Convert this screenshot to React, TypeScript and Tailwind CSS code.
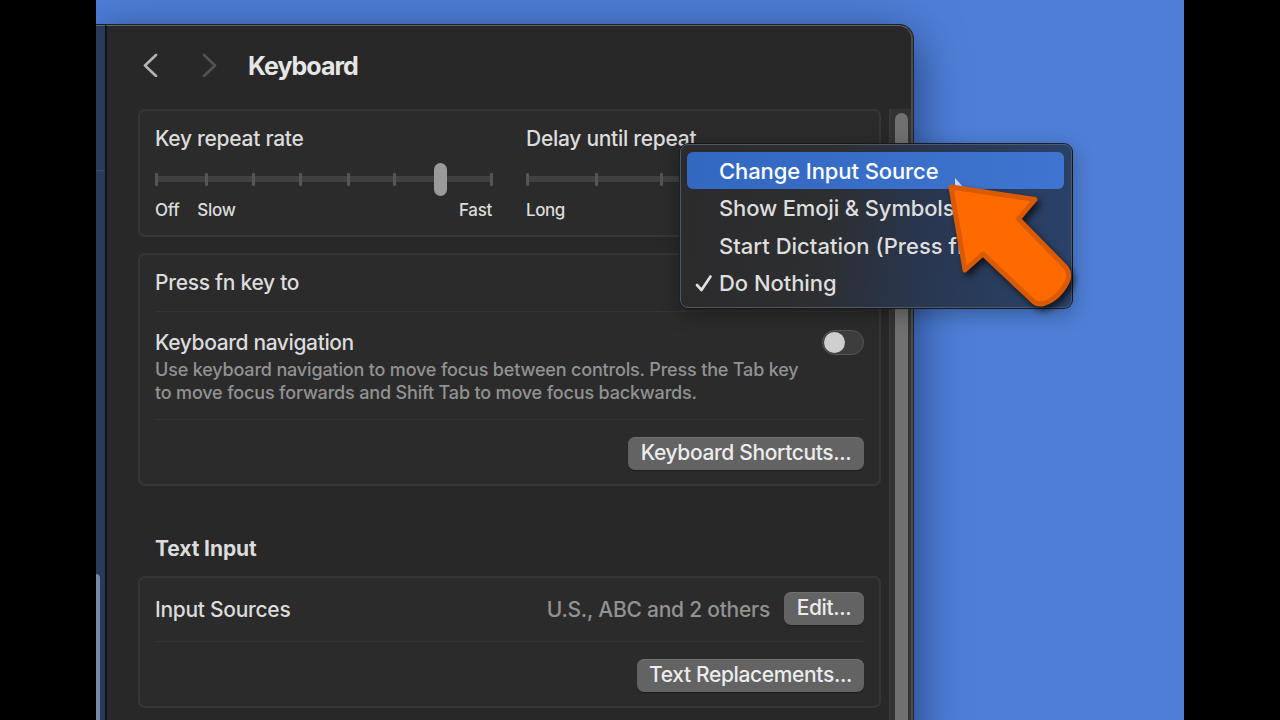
import React from 'react';

interface SliderProps {
  ticks: number[];
  thumb?: number;
}

const rateTicks = [0, 50, 97, 144, 192, 238, 335];
const delayTicks = [0, 69, 134, 200, 267, 335];

const menuItems = [
  { label: 'Change Input Source', className: 'tracking-[-0.1px]' },
  { label: 'Show Emoji & Symbols', className: 'tracking-[-0.15px]' },
  { label: 'Start Dictation (Press fn)', className: 'tracking-[0.02px]' },
  { label: 'Do Nothing', className: 'tracking-[-0.05px]' },
];

const Slider: React.FC<SliderProps> = ({ ticks, thumb }) => (
  <div className="relative flex h-8 w-[338px] items-center">
    <div className="h-[6px] w-full bg-[#404040]" />
    {ticks.map(tick => (
      <div key={tick} className="absolute top-[10px] h-[13px] w-[3px] rounded-[1px] bg-[#555]" style={{ left: tick }} />
    ))}
    {thumb !== undefined && (
      <div className="absolute top-0 h-[33px] w-[13px] rounded-full bg-[#9a9a9a]" style={{ left: thumb }} />
    )}
  </div>
);

const Card: React.FC<{ className?: string; children: React.ReactNode }> = ({ className = '', children }) => (
  <section className={`w-[743px] rounded-[7px] border-2 border-[#363636] bg-[#2b2b2b] px-[15px] ${className}`}>
    {children}
  </section>
);

const PushButton: React.FC<{ className?: string; children: React.ReactNode }> = ({ className = '', children }) => (
  <button className={`flex h-[33px] shrink-0 items-center justify-center rounded-[7px] border-t border-[#707070] bg-[#636363] pb-[2px] text-[21px] tracking-[-0.36px] text-[#ececec] shadow-[0_1px_1px_rgba(0,0,0,0.35)] ${className}`}>
    {children}
  </button>
);

const Header = () => (
  <header className="flex h-[83px] items-center pb-[2px] pl-[35px]">
    <svg className="mb-[3px] h-6 w-4" viewBox="0 0 16 24" fill="none" stroke="#b4b4b4" strokeWidth="2.6" strokeLinecap="round" strokeLinejoin="round">
      <path d="M14 2L3 12.500L14 23" />
    </svg>
    <svg className="mb-[3px] ml-[44px] h-6 w-4" viewBox="0 0 16 24" fill="none" stroke="#535353" strokeWidth="2.6" strokeLinecap="round" strokeLinejoin="round">
      <path d="M2 2L13 12.500L2 23" />
    </svg>
    <h1 className="ml-[30px] text-[25px] font-bold tracking-[-1px] text-[#e6e6e6]">Keyboard</h1>
  </header>
);

const RepeatCard = () => (
  <Card className="flex h-[128px] gap-[33px] pt-[12px]">
    <div className="w-[338px]">
      <div className="text-[21px] leading-[32px]">Key repeat rate</div>
      <div className="mt-[8px]">
        <Slider ticks={rateTicks} thumb={279} />
      </div>
      <div className="mt-[3px] flex pr-px text-[17px] leading-[24px] tracking-[-0.3px]">
        <span>Off</span>
        <span className="ml-[18px]">Slow</span>
        <span className="ml-auto">Fast</span>
      </div>
    </div>
    <div className="w-[338px]">
      <div className="text-[21px] leading-[32px]">Delay until repeat</div>
      <div className="mt-[8px]">
        <Slider ticks={delayTicks} />
      </div>
      <div className="mt-[3px] text-[17px] leading-[24px] tracking-[-0.45px]">Long</div>
    </div>
  </Card>
);

const NavigationCard = () => (
  <Card className="mt-4 h-[233px]">
    <div className="flex h-[57px] items-center border-b border-[#343434] text-[21px]">Press fn key to</div>
    <div className="h-[108px] border-b border-[#343434] pt-[16px]">
      <div className="flex items-center justify-between">
        <span className="pt-px text-[21px] leading-[28px] tracking-[-0.38px]">Keyboard navigation</span>
        <div className="flex h-[25px] w-[42px] items-center rounded-full border border-[#555] bg-[#3d3d3d] pl-px">
          <div className="h-[21px] w-[21px] rounded-full bg-[#cfcfcf]" />
        </div>
      </div>
      <p className="mt-[2px] whitespace-nowrap text-[18px] leading-[22.500px] tracking-[-0.17px] text-[#929292]">
        Use keyboard navigation to move focus between controls. Press the Tab key
        <br />
        to move focus forwards and Shift Tab to move focus backwards.
      </p>
    </div>
    <div className="flex justify-end pt-[17px]">
      <PushButton className="w-[236px]">Keyboard Shortcuts...</PushButton>
    </div>
  </Card>
);

const InputCard = () => (
  <Card className="h-[132px]">
    <div className="flex h-[64px] items-center border-b border-[#343434] text-[21px]">
      <span>Input Sources</span>
      <span className="ml-auto mr-[14px] tracking-[-0.24px] text-[#929292]">U.S., ABC and 2 others</span>
      <PushButton className="mb-[3px] w-[80px]">Edit...</PushButton>
    </div>
    <div className="flex justify-end pt-[17px]">
      <PushButton className="w-[227px]">Text Replacements...</PushButton>
    </div>
  </Card>
);

const Checkmark = () => (
  <svg className="h-[20px] w-[18px]" viewBox="0 0 18 20" fill="none" stroke="currentColor" strokeWidth="2.7" strokeLinecap="round" strokeLinejoin="round">
    <path d="M2 12L6.500 17L15.500 3.500" />
  </svg>
);

const Menu = () => (
  <div className="absolute left-[583px] top-[143px] h-[166px] w-[394px] rounded-[9px] border border-black/50 bg-[linear-gradient(98deg,#2b2b2c_0%,#2d2e30_38%,#29364f_62%,#2a436b_100%)] shadow-[0_5px_20px_rgba(0,0,0,0.3)]">
    <div className="h-full rounded-[8px] border border-[#505862] px-[6px] pt-[7px]">
      {menuItems.map((item, index) => (
        <div
          key={item.label}
          className={`flex h-[37.300px] w-[377px] items-center overflow-hidden whitespace-nowrap rounded-[6px] text-[22px] font-[450] ${index === 0 ? 'bg-[linear-gradient(90deg,#3268c0,#3f74d0)] text-white' : 'text-[#dedede]'}`}
        >
          <span className="flex w-[32px] shrink-0 pl-[8px]">
            {item.label === 'Do Nothing' && <Checkmark />}
          </span>
          <span className={`pt-[2px] ${item.className}`}>{item.label}</span>
        </div>
      ))}
    </div>
  </div>
);

const Pointer = () => (
  <svg className="absolute left-[844px] top-[168px] h-[152px] w-[144px] overflow-visible" viewBox="940 168 144 152">
    <path d="M955 178L963 187L955 187Z" fill="#cfdcf3" />
    <path
      d="M951 187L1035 199.500L1018.500 219L1066 267.500Q1070 273 1068 280Q1060 298 1044 303.500Q1038 305 1034 302L983 254L965 270Z"
      fill="#ff6a00"
      stroke="#d95a00"
      strokeWidth="5"
      strokeLinejoin="round"
      className="drop-shadow-[3px_4px_3px_rgba(0,0,0,0.65)]"
    />
  </svg>
);

const App: React.FC = () => {
  return (
    <div className="flex h-[720px] w-[1280px] justify-center overflow-hidden bg-black font-['Inter','Liberation_Sans',sans-serif] font-[450] tracking-[-0.28px] text-[#dcdcdc]">
      <div className="relative h-[720px] w-[1088px] overflow-hidden bg-[#4e7fd7] pt-[24px]">
        <div className="flex h-[720px] w-[818px] overflow-hidden rounded-tr-[15px] border-r border-t border-[#1c222c] bg-[#282828] shadow-[0_14px_50px_rgba(0,10,40,0.6)]">
          <aside className="w-[9px] shrink-0 border-t border-[#5c6675] bg-[#2a3b5a] pt-[144px]">
            <div className="h-[404px] border-t border-[#35486a]" />
            <div className="h-[170px] w-[4px] rounded-tr-[4px] bg-[#7889a7]" />
          </aside>
          <main className="min-w-0 flex-1 overflow-hidden rounded-tr-[14px] border-l-2 border-r-2 border-t border-l-[#101317] border-r-[#4c4c4c] border-t-[#626262]">
            <Header />
            <div className="flex">
              <div className="w-[782px] shrink-0 pl-[31px]">
                <RepeatCard />
                <NavigationCard />
                <h2 className="flex h-[90px] items-center pl-[17px] pt-[35px] text-[21px] font-[650] tracking-[-0.1px]">Text Input</h2>
                <InputCard />
              </div>
              <div className="h-[640px] flex-1 border-l border-[#3b3b3b] bg-[#333] pl-[5px] pt-[4px]">
                <div className="h-[640px] w-[13px] rounded-full bg-[#707070]" />
              </div>
            </div>
          </main>
        </div>
        <Menu />
        <Pointer />
      </div>
    </div>
  );
};

export default App;
